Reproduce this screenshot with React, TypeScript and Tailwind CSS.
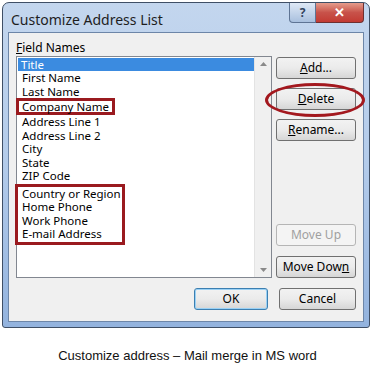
import React from 'react';

const font = { fontFamily: '"Noto Sans", "Open Sans", sans-serif' };

function Btn({ children, className = '', disabled = false }: { children: React.ReactNode; className?: string; disabled?: boolean }) {
  return (
    <div
      className={`flex items-center justify-center rounded-[3px] border text-[12px] leading-none ${
        disabled
          ? 'border-[#b5b5b5] bg-[#f4f4f4] text-[#a0a0a0]'
          : 'border-[#707070] bg-gradient-to-b from-[#f2f2f2] via-[#ebebeb] to-[#d6d6d6] text-black'
      } ${className}`}
    >
      {children}
    </div>
  );
}

const before = ['First Name', 'Last Name'];
const middle = ['Address Line 1', 'Address Line 2', 'City', 'State', 'ZIP Code'];
const boxed = ['Country or Region', 'Home Phone', 'Work Phone', 'E-mail Address'];

function Item({ children }: { children: React.ReactNode }) {
  return <div className="h-[13.5px] pl-[4px] leading-[13.5px] whitespace-nowrap">{children}</div>;
}

export default function App() {
  return (
    <div className="relative h-[370px] w-[375px] overflow-hidden bg-white text-black" style={font}>
      {/* dialog frame */}
      <div className="ml-[2px] mt-[2px] h-[326px] w-[368px] rounded-t-[7px] rounded-b-[3px] border border-[#3f4f66] bg-gradient-to-b from-[#c3d6ee] via-[#b3cbea] to-[#93b3de] p-[5px] pt-0">
        <div className="flex h-[29px] items-center justify-between">
          <span className="pl-[3px] pt-[4px] text-[14px] text-[#1e1e1e]">Customize Address List</span>
          <div className="flex self-start">
            <div className="flex h-[20px] w-[27px] items-center justify-center rounded-bl-[4px] border border-t-0 border-[#5e7494] bg-gradient-to-b from-[#dfe9f6] to-[#a9c0de] text-[12px] font-bold text-[#33445e]">
              ?
            </div>
            <div className="flex h-[20px] w-[48px] items-center justify-center rounded-br-[4px] border border-t-0 border-l-0 border-[#6e3030] bg-gradient-to-b from-[#e49c8c] via-[#c8524a] to-[#c23a33] text-[13px] font-bold text-white">
              ✕
            </div>
          </div>
        </div>
        {/* content panel */}
        <div className="h-[290px] border border-[#6d86a8] bg-[#f0f0f0] px-[7px] pt-[6px] text-[11.5px]">
          <div className="h-[17px] text-[12px] leading-[17px]">
            <span className="underline">F</span>ield Names
          </div>
          <div className="flex gap-[4px]">
            {/* list box */}
            <div className="flex h-[222px] w-[257px] border border-[#828790] bg-white">
              <div className="flex-1 pt-[1px] pl-[1px]">
                <div className="h-[13px] bg-[#3b8be0] pl-[3px] leading-[13px] text-white">Title</div>
                {before.map((t) => (
                  <Item key={t}>{t}</Item>
                ))}
                <div className="-ml-[2px] inline-block border-[3px] border-[#9a1a1f] pr-[3px] leading-[11px]">
                  <div className="h-[11px] pl-[3px] leading-[11px]">Company Name</div>
                </div>
                {middle.map((t) => (
                  <Item key={t}>{t}</Item>
                ))}
                <div className="-ml-[3px] mt-[1px] w-[110px] border-[3px] border-[#9a1a1f] pb-[1px]">
                  {boxed.map((t) => (
                    <div key={t} className="h-[13.5px] pl-[4px] leading-[13.5px] whitespace-nowrap">
                      {t}
                    </div>
                  ))}
                </div>
              </div>
              {/* scrollbar */}
              <div className="flex w-[17px] flex-col items-center justify-between border-l border-[#e3e3e3] bg-[#f0f0f0] py-[5px]">
                <svg width="7" height="4" viewBox="0 0 7 4">
                  <path d="M0 4 L3.5 0 L7 4 Z" fill="#8a8a8a" />
                </svg>
                <svg width="7" height="4" viewBox="0 0 7 4">
                  <path d="M0 0 L3.5 4 L7 0 Z" fill="#8a8a8a" />
                </svg>
              </div>
            </div>
            {/* side buttons */}
            <div className="flex h-[222px] flex-col pt-[1px]">
              <Btn className="h-[22px] w-[80px]">
                <span className="underline">A</span>dd...
              </Btn>
              <Btn className="mt-[9px] h-[22px] w-[80px]">
                <span className="underline">D</span>elete
              </Btn>
              <Btn className="mt-[9px] h-[22px] w-[80px]">
                <span className="underline">R</span>ename...
              </Btn>
              <div className="flex-1" />
              <Btn disabled className="h-[22px] w-[80px]">
                Move Up
              </Btn>
              <Btn className="mt-[10px] h-[22px] w-[80px]">
                Move Dow<span className="underline">n</span>
              </Btn>
            </div>
          </div>
          <div className="mt-[10px] flex justify-end gap-[11px]">
            <Btn className="h-[22px] w-[74px] !border-[#3c7fb1] shadow-[inset_0_0_0_1px_#9ad1f5]">OK</Btn>
            <Btn className="h-[22px] w-[77px]">Cancel</Btn>
          </div>
        </div>
      </div>
      {/* annotation ellipse around Delete */}
      <div className="absolute left-[265px] top-[83px] h-[34px] w-[100px] rounded-[50%] border-[3px] border-[#a3181e]" />
      <div className="mt-[18px] text-center text-[13px] text-[#111]" style={{ fontFamily: '"Liberation Sans", Arial, sans-serif' }}>
        Customize address – Mail merge in MS word
      </div>
    </div>
  );
}
